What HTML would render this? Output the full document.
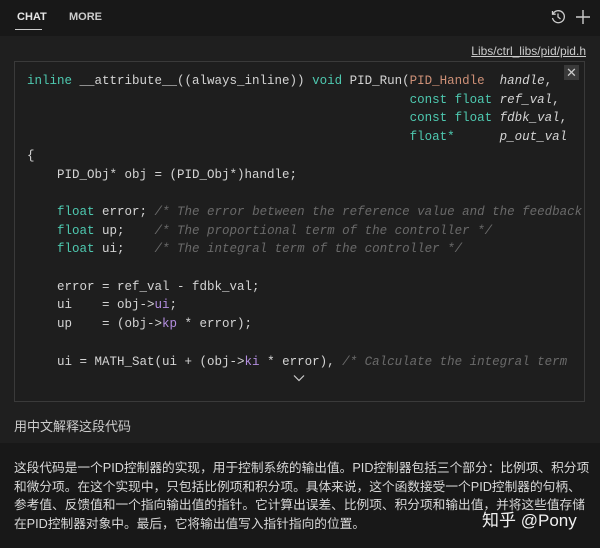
<!DOCTYPE html>
<html><head><meta charset="utf-8"><style>
*{margin:0;padding:0;box-sizing:border-box}
body{width:600px;height:548px;background:#1f1f1f;overflow:hidden;font-family:"Liberation Sans","Noto Sans CJK SC",sans-serif;color:#ccc;position:relative}
.top{position:absolute;left:0;top:0;width:600px;height:36px;background:#181818}
.tab{position:absolute;top:11px;font-size:11px;font-weight:bold;color:#e7e7e7}
.ul{position:absolute;left:15px;top:29px;width:27px;height:1px;background:#ccc}
.path{position:absolute;right:14px;top:44px;font-size:12px;color:#ccc;text-decoration:underline}
.box{position:absolute;left:14px;top:61px;width:571px;height:341px;border:1px solid #3a3a3a;background:#1e1e1e;overflow:hidden}
pre{position:absolute;left:12px;top:10px;font-family:"Liberation Mono",monospace;font-size:12.5px;line-height:18.7px;color:#d4d4d4;white-space:pre}
.k{color:#4ec9b0}.o{color:#ce9178}.i{font-style:italic}.c{color:#6a6a6a;font-style:italic}.m{color:#b48ee0}
.x{position:absolute;right:5px;top:3px;width:15px;height:15px;background:#3a3a3a;color:#ccc;font-size:13px;line-height:15px;text-align:center}
.q{position:absolute;left:14px;top:416px;font-size:13px;color:#ccc}
.ans{position:absolute;left:0;top:443px;width:600px;height:105px;background:#181818}
.ans p{position:absolute;left:14px;top:16px;font-size:12.7px;line-height:18.5px;color:#d8d8d8;white-space:nowrap}
.wm{position:absolute;left:482px;top:506px;font-size:17px;color:#f0f0f0}
</style></head><body>
<div class="top">
<div class="tab" style="left:17px">CHAT</div><div class="ul"></div>
<div class="tab" style="left:69px;color:#ccc">MORE</div>
<svg style="position:absolute;left:550px;top:9px" width="16" height="16" viewBox="0 0 16 16" fill="none" stroke="#ccc" stroke-width="1.3"><path d="M3 5A6 6 0 1 1 2.5 9"/><path d="M2.5 2v3.2h3.2"/><path d="M8 4.5V8l2.5 2"/></svg>
<svg style="position:absolute;left:575px;top:9px" width="16" height="16" viewBox="0 0 16 16" stroke="#ccc" stroke-width="1.4"><path d="M8 1v14M1 8h14"/></svg>
</div>
<div class="path">Libs/ctrl_libs/pid/pid.h</div>
<div class="box">
<div class="x">✕</div>
<pre><span class="k">inline</span> __attribute__((always_inline)) <span class="k">void</span> PID_Run(<span class="o">PID_Handle</span>  <span class="i">handle</span>,
                                                   <span class="k">const float</span> <span class="i">ref_val</span>,
                                                   <span class="k">const float</span> <span class="i">fdbk_val</span>,
                                                   <span class="k">float*</span>      <span class="i">p_out_val</span>
{
    PID_Obj* obj = (PID_Obj*)handle;

    <span class="k">float</span> error; <span class="c">/* The error between the reference value and the feedback</span>
    <span class="k">float</span> up;    <span class="c">/* The proportional term of the controller */</span>
    <span class="k">float</span> ui;    <span class="c">/* The integral term of the controller */</span>

    error = ref_val - fdbk_val;
    ui    = obj-><span class="m">ui</span>;
    up    = (obj-><span class="m">kp</span> * error);

    ui = MATH_Sat(ui + (obj-><span class="m">ki</span> * error), <span class="c">/* Calculate the integral term</span></pre>
<svg style="position:absolute;left:278px;top:312px" width="12" height="8" viewBox="0 0 12 8" fill="none" stroke="#ccc" stroke-width="1.2"><path d="M1 1.5l5 5 5-5"/></svg>
</div>
<div class="q">用中文解释这段代码</div>
<div class="ans"><p>这段代码是一个PID控制器的实现，用于控制系统的输出值。PID控制器包括三个部分：比例项、积分项<br>和微分项。在这个实现中，只包括比例项和积分项。具体来说，这个函数接受一个PID控制器的句柄、<br>参考值、反馈值和一个指向输出值的指针。它计算出误差、比例项、积分项和输出值，并将这些值存储<br>在PID控制器对象中。最后，它将输出值写入指针指向的位置。</p></div>
<div class="wm">知乎 @Pony</div>
</body></html>
